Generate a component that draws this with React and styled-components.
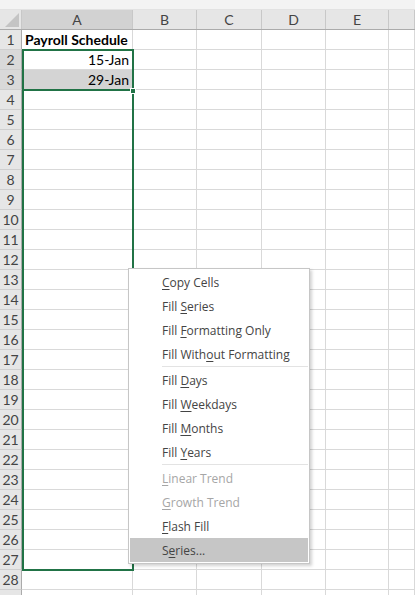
import styled, { createGlobalStyle } from 'styled-components';

const GREEN = '#217346';
const COLUMNS = ['A', 'B', 'C', 'D', 'E', ''];
const TEMPLATE = '22px 111px 64px 65px 64px 63px 26px';

const cellsFor = row => {
  if (row === 1) return { text: 'Payroll Schedule', bold: true };
  if (row === 2) return { text: '15-Jan', align: 'right' };
  if (row === 3) return { text: '29-Jan', align: 'right', shade: true };
  return null;
};

const menu = [
  [
    { label: 'Copy Cells', key: 0 },
    { label: 'Fill Series', key: 5 },
    { label: 'Fill Formatting Only', key: 5 },
    { label: 'Fill Without Formatting', key: 9 },
  ],
  [
    { label: 'Fill Days', key: 5 },
    { label: 'Fill Weekdays', key: 5 },
    { label: 'Fill Months', key: 5 },
    { label: 'Fill Years', key: 5 },
  ],
  [
    { label: 'Linear Trend', key: 0, disabled: true },
    { label: 'Growth Trend', key: 0, disabled: true },
    { label: 'Flash Fill', key: 0 },
    { label: 'Series...', key: 1, active: true },
  ],
];

function Label({ label, at }) {
  return (
    <span>
      {label.slice(0, at)}
      <u>{label[at]}</u>
      {label.slice(at + 1)}
    </span>
  );
}

export default function App() {
  const rows = Array.from({ length: 29 }, (_, i) => i + 1);

  return (
    <Sheet>
      <GlobalStyle />
      <Strip />
      <HeaderRow>
        <Corner>
          <svg width="14" height="14" viewBox="0 0 14 14">
            <polygon points="14,0 14,14 0,14" fill="#c4c4c4" />
          </svg>
        </Corner>
        {COLUMNS.map((c, i) => (
          <ColHead key={i} $selected={c === 'A'}>{c}</ColHead>
        ))}
      </HeaderRow>
      {rows.map(r => {
        const data = cellsFor(r);
        return (
          <Row key={r}>
            <RowHead $selected={r === 2 || r === 3}>{r < 29 ? r : ''}</RowHead>
            <Cell $align={data?.align} $bold={data?.bold} $shade={data?.shade}>
              {data?.text}
            </Cell>
            <Cell />
            <Cell />
            <Cell />
            <Cell />
            <Cell />
          </Row>
        );
      })}

      <Selection>
        <SelectedBlock />
        <Handle />
      </Selection>

      <Menu>
        {menu.map((group, g) => (
          <Group key={g} $first={g === 0}>
            {group.map(item => (
              <Item key={item.label} $disabled={item.disabled} $active={item.active}>
                <Label label={item.label} at={item.key} />
              </Item>
            ))}
          </Group>
        ))}
      </Menu>
    </Sheet>
  );
}

const GlobalStyle = createGlobalStyle`
  html, body {
    margin: 0;
    padding: 0;
    background: #fff;
    overflow: hidden;
  }
  * {
    box-sizing: border-box;
  }
`;

const Sheet = styled.div`
  position: relative;
  width: 415px;
  height: 595px;
  overflow: hidden;
  background: #fff;
  font-family: Lato, "Liberation Sans", sans-serif;
  color: #000;
`;

const Strip = styled.div`
  height: 10px;
  background: #f3f3f3;
  border-bottom: 1px solid #e2e2e2;
`;

const Row = styled.div`
  display: grid;
  grid-template-columns: ${TEMPLATE};
  height: 20px;
`;

const HeaderRow = styled(Row)`
  background: #e6e6e6;
  border-bottom: 1px solid #ababab;
`;

const Corner = styled.div`
  display: flex;
  align-items: flex-end;
  justify-content: flex-end;
  padding: 0 2px 2px 0;
  border-right: 1px solid #c8c8c8;
`;

const ColHead = styled.div`
  display: flex;
  align-items: center;
  justify-content: center;
  font-size: 14px;
  color: #444;
  border-right: 1px solid #c8c8c8;
  background: ${p => (p.$selected ? '#d2d2d2' : 'transparent')};
`;

const RowHead = styled.div`
  display: flex;
  align-items: center;
  justify-content: center;
  font-size: 14px;
  color: #444;
  background: ${p => (p.$selected ? '#d9d9d9' : '#e6e6e6')};
  border-right: 1px solid #ababab;
  border-bottom: 1px solid #cfcfcf;
`;

const Cell = styled.div`
  display: flex;
  align-items: center;
  justify-content: ${p => (p.$align === 'right' ? 'flex-end' : 'flex-start')};
  padding: 0 3px;
  font-size: 14px;
  font-weight: ${p => (p.$bold ? 700 : 400)};
  white-space: nowrap;
  background: ${p => (p.$shade ? '#d4d4d4' : '#fff')};
  border-right: 1px solid #d9d9d9;
  border-bottom: 1px solid #d9d9d9;
`;

const Selection = styled.div`
  position: absolute;
  left: 22px;
  top: 49px;
  width: 112px;
  height: 522px;
  border: 2px solid ${GREEN};
  pointer-events: none;
`;

const SelectedBlock = styled.div`
  height: 40px;
  border-bottom: 2px solid ${GREEN};
`;

const Handle = styled.div`
  position: absolute;
  right: -4px;
  top: 37px;
  width: 6px;
  height: 6px;
  background: ${GREEN};
  border: 1px solid #fff;
`;

const Menu = styled.div`
  position: absolute;
  left: 128px;
  top: 268px;
  width: 182px;
  padding: 1px;
  background: #fff;
  border: 1px solid #c6c6c6;
  box-shadow: 2px 2px 3px rgba(0, 0, 0, 0.18);
  font-family: "Open Sans", "Noto Sans", sans-serif;
  font-size: 12px;
`;

const Group = styled.div`
  position: relative;
  padding-top: ${p => (p.$first ? 0 : '2px')};
  &::before {
    content: '';
    display: ${p => (p.$first ? 'none' : 'block')};
    position: absolute;
    top: 0;
    left: 32px;
    right: 0;
    height: 1px;
    background: #e3e3e3;
  }
`;

const Item = styled.div`
  display: flex;
  align-items: center;
  height: 24px;
  padding-left: 32px;
  color: ${p => (p.$disabled ? '#a6a6a6' : '#444')};
  background: ${p => (p.$active ? '#c6c6c6' : 'transparent')};
  u {
    text-underline-offset: 2px;
  }
`;
